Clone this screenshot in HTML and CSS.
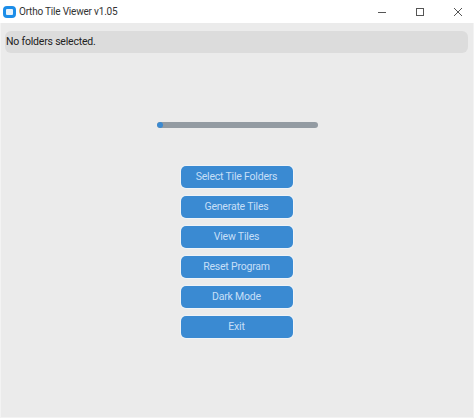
FILE: index.html
```html
<!DOCTYPE html>
<html lang="en">
<head>
    <meta charset="UTF-8">
    <meta name="viewport" content="width=device-width, initial-scale=1.0">
    <title>Ortho Tile Viewer v1.05</title>
    <link rel="stylesheet" href="styles.css">
</head>
<body>
    <header class="titlebar">
        <div class="app-icon"></div>
        <span class="app-title">Ortho Tile Viewer v1.05</span>
        <div class="window-controls">
            <svg class="window-icon" viewBox="0 0 8 8"><path d="M0 4.5H8" /></svg>
            <svg class="window-icon" viewBox="0 0 8 8"><rect x="0.5" y="0.5" width="7" height="7" /></svg>
            <svg class="window-icon" viewBox="0 0 8 8"><path d="M0 0L8 8M8 0L0 8" /></svg>
        </div>
    </header>

    <main class="content">
        <div class="status">No folders selected.</div>

        <div class="progress">
            <div class="progress-fill"></div>
        </div>

        <div class="actions">
            <button class="action">Select Tile Folders</button>
            <button class="action">Generate Tiles</button>
            <button class="action">View Tiles</button>
            <button class="action">Reset Program</button>
            <button class="action">Dark Mode</button>
            <button class="action">Exit</button>
        </div>
    </main>
</body>
</html>
```

FILE: styles.css
```css
html, body {
    height: 100%;
}

body {
    margin: 0;
    font-family: 'Roboto', sans-serif;
    background-color: #ebebeb;
    display: flex;
    flex-direction: column;
    overflow: hidden;
}

.titlebar {
    height: 23px;
    background-color: #fff;
    display: flex;
    align-items: center;
    padding-left: 3px;
    flex-shrink: 0;
}

.app-icon {
    width: 7px;
    height: 6px;
    border: 3px solid #1c8de8;
    border-radius: 4px;
    background-color: #e8f3fc;
}

.app-title {
    margin-left: 3px;
    font-family: 'Roboto', sans-serif;
    font-size: 10px;
    letter-spacing: -0.2px;
    color: #333;
}

.window-controls {
    margin-left: auto;
    display: flex;
    align-items: center;
    gap: 30px;
    padding-right: 12px;
}

.window-icon {
    width: 8px;
    height: 8px;
    fill: none;
    stroke: #555;
    stroke-width: 1;
}

.content {
    flex: 1;
    display: flex;
    flex-direction: column;
    align-items: center;
    padding: 8px 5px 0 4px;
    border-right: 1px solid #f3f3f3;
    border-bottom: 1px solid #f3f3f3;
    border-left: 1px solid #f3f3f3;
}

.status {
    align-self: stretch;
    height: 22px;
    line-height: 22px;
    padding-left: 1px;
    background-color: #dcdcdc;
    border-radius: 6px;
    font-size: 10.5px;
    letter-spacing: -0.2px;
    color: #222;
}

.progress {
    width: 161px;
    height: 6px;
    margin-top: 69px;
    margin-left: 2px;
    background-color: #939ba2;
    border-radius: 3px;
    overflow: hidden;
}

.progress-fill {
    width: 6px;
    height: 100%;
    background-color: #3a8ad2;
    border-radius: 3px;
}

.actions {
    margin-top: 38px;
    display: flex;
    flex-direction: column;
    gap: 8px;
}

.action {
    width: 112px;
    height: 22px;
    padding: 0 0 1px;
    border: none;
    border-radius: 5px;
    background-color: #3a8ad2;
    box-shadow: 0 0 0 1px #eff3f7;
    color: #c6dff7;
    font-family: 'Roboto', sans-serif;
    font-size: 10.5px;
    letter-spacing: -0.2px;
    cursor: pointer;
}
```
